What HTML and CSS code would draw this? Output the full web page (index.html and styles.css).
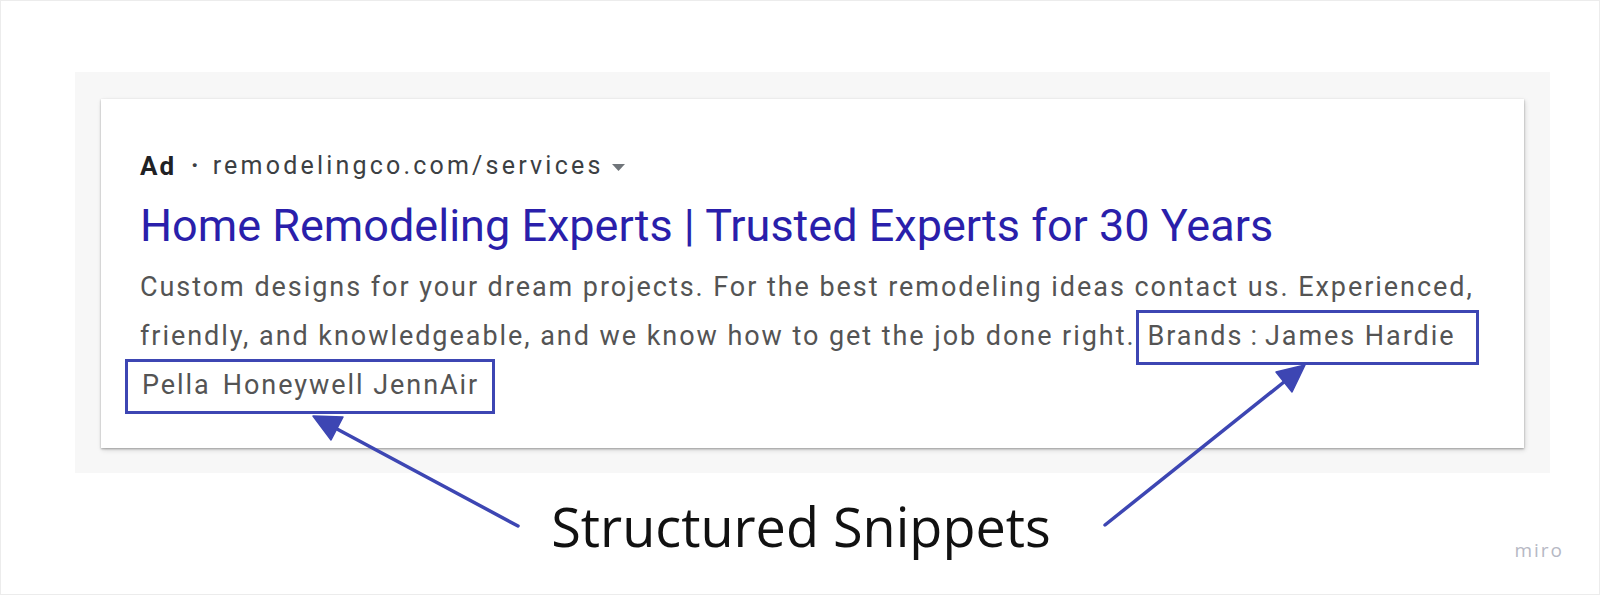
FILE: index.html
```html
<!DOCTYPE html>
<html lang="en">
<head>
<meta charset="utf-8">
<title>Structured Snippets</title>
<link rel="stylesheet" href="styles.css">
</head>
<body>
<div class="page">
  <div class="panel">
    <div class="card">
      <div class="ad-line">
        <span class="ad-label">Ad</span><span class="dot">·</span><span class="url">remodelingco.com/services</span><svg class="caret" width="13" height="7" viewBox="0 0 13 7"><path d="M0 0 H13 L6.5 7 Z" fill="#70757a"/></svg>
      </div>
      <div class="title">Home Remodeling Experts | Trusted Experts for 30 Years</div>
      <p class="desc">Custom designs for your dream projects. For the best remodeling ideas contact us. Experienced,<br>friendly, and knowledgeable, and we know how to get the job done right.<span class="snip snip-first">Brands<span class="colon">:</span>James Hardie</span><br><span class="snip snip-second">Pella<span class="gap"></span>Honeywell JennAir</span></p>
    </div>
  </div>
  <div class="caption">Structured Snippets</div>
  <svg class="arrows" width="1600" height="595" viewBox="0 0 1600 595">
    <line x1="518" y1="526" x2="337" y2="429" stroke="#3d46b3" stroke-width="3.5" stroke-linecap="round"/>
    <polygon points="313,416 343,417 331,440" fill="#3d46b3" stroke="#3d46b3" stroke-width="1.5" stroke-linejoin="round"/>
    <line x1="1105" y1="525" x2="1284" y2="382" stroke="#3d46b3" stroke-width="3.5" stroke-linecap="round"/>
    <polygon points="1305,365 1292,392 1276,372" fill="#3d46b3" stroke="#3d46b3" stroke-width="1.5" stroke-linejoin="round"/>
  </svg>
  <div class="watermark">miro</div>
</div>
</body>
</html>
```

FILE: styles.css
```css
html, body {
  margin: 0;
  padding: 0;
  background: #ffffff;
}

.page {
  position: relative;
  width: 1600px;
  height: 595px;
  box-sizing: border-box;
  border: 1px solid #ececec;
  padding: 71px 0 0 74px;
  overflow: hidden;
}

.panel {
  width: 1475px;
  height: 401px;
  box-sizing: border-box;
  background: #f7f7f7;
  padding: 27px 26px 25px 26px;
}

.card {
  height: 349px;
  box-sizing: border-box;
  background: #ffffff;
  padding: 52px 20px 0 39px;
  box-shadow: 0 1px 2px rgba(0, 0, 0, 0.3), 1px 2px 5px rgba(0, 0, 0, 0.14);
  font-family: Roboto, "Liberation Sans", Arial, sans-serif;
}

.ad-line {
  display: flex;
  align-items: center;
  height: 30px;
  line-height: 30px;
  font-size: 25px;
}

.ad-label {
  font-size: 26px;
  font-weight: 700;
  letter-spacing: 2px;
  color: #202124;
}

.dot {
  color: #3c4043;
  font-weight: 700;
  margin: 0 14px 0 15px;
}

.url {
  color: #3c4043;
  letter-spacing: 3.2px;
}

.caret {
  margin-left: 8px;
  margin-top: 2px;
}

.title {
  margin-top: 17px;
  height: 56px;
  line-height: 56px;
  font-size: 45px;
  color: #2a1fab;
}

.desc {
  margin: 9px 0 0 0;
  font-size: 27px;
  line-height: 49px;
  color: #545454;
  letter-spacing: 1.95px;
  white-space: nowrap;
}

.snip {
  border: 3px solid #3d46b3;
  padding: 7px 0 10px;
}

.snip-first {
  margin-left: 0;
  padding-left: 9px;
  padding-right: 20px;
}

.colon {
  margin: 0 6px 0 7px;
}

.snip-second {
  margin-left: -15px;
  padding-left: 14px;
  padding-right: 13px;
}

.gap {
  display: inline-block;
  width: 12px;
}

.caption {
  margin-top: 21px;
  width: 1452px;
  text-align: center;
  font-family: "Open Sans", "Noto Sans", sans-serif;
  font-size: 54px;
  line-height: 64px;
  color: #111111;
}

.arrows {
  position: absolute;
  left: -1px;
  top: -1px;
  pointer-events: none;
}

.watermark {
  position: absolute;
  right: 35px;
  bottom: 34px;
  font-family: "Open Sans", "Noto Sans", sans-serif;
  font-size: 19px;
  line-height: 20px;
  letter-spacing: 2px;
  color: #b6b8c4;
}
```
